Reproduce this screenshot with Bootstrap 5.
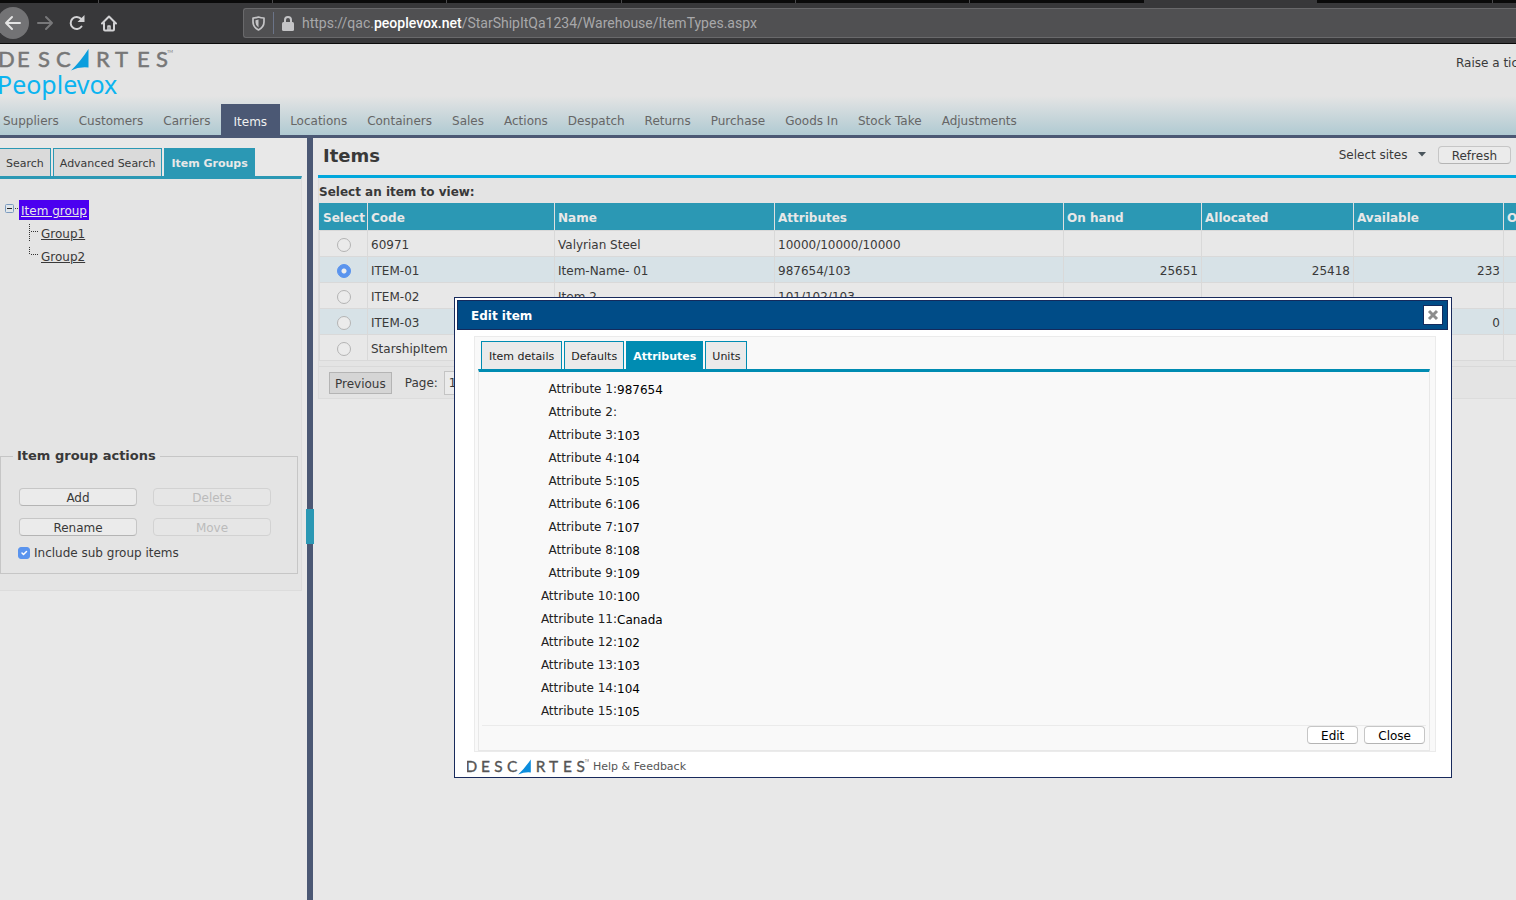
<!DOCTYPE html>
<html lang="en">
<head>
<meta charset="utf-8">
<meta name="viewport" content="width=device-width, initial-scale=1">
<title>Items - Peoplevox</title>
<link href="https://cdn.jsdelivr.net/npm/bootstrap@5.3.0/dist/css/bootstrap.min.css" rel="stylesheet">
<style>
  :root { --teal: #2b98b4; --slate: #4b5874; --line: #d9d9d9; }
  body { font: 12px/16px "DejaVu Sans", Verdana, sans-serif; color: #393939; background: #e8e8e8; overflow-x: hidden; }
  a { color: inherit; }

  .tabstrip { height: 3px; background: #0a0a0a; }
  .tabstrip i { border-right: 1px solid #4a4a4c; flex: none; }
  .tabstrip i.current { background: #38383a; border: 0; }
  .toolbar { height: 41px; background: #38383a; border-bottom: 1px solid #0a0a0a; }
  .toolbar button { background: none; border: 0; padding: 0; width: 32px; height: 32px; flex: none; display: grid; place-items: center; }
  .toolbar .back { background: #737375; border-radius: 50%; margin-left: -3px; }
  .address { height: 30px; margin-left: 118px; background: #505052; border: 1px solid #69696b; border-right: 0; border-radius: 3px 0 0 3px; font: 14px/20px Roboto, sans-serif; color: #a8a8aa; white-space: nowrap; }
  .address b { color: #fff; font-weight: 500; }
  .address .sep { width: 1px; height: 22px; background: #6b7488; }

  .masthead { height: 94px; border-bottom: 3px solid var(--slate); background: linear-gradient(#e4e4e4 0, #e4e4e4 52px, #b0cad2 91px); overflow: hidden; }
  .wordmark { stroke-width: .5; }
  .product { font: 25px/24px "Noto Sans", sans-serif; color: #0cb4f0; margin-left: -3px; }
  .raise { width: 60px; white-space: nowrap; overflow: hidden; text-decoration: none; margin-top: 11px; }
  .mainnav a { padding: 9px 10px 6px; color: #666; text-decoration: none; white-space: nowrap; height: 31px; }
  .mainnav a:first-child { padding-left: 3px; }
  .mainnav a.active { padding: 10px 13px 5px; background: var(--slate); color: #f0f0f0; }

  .side { width: 307px; flex: none; padding: 10px 5px 0 0; }
  .tabset { gap: 2px; font-size: 11px; height: 28px; }
  .tabset button { border: 1px solid var(--tab); border-bottom: 0; background: var(--tabbg); color: inherit; padding: 2px 6px 0; height: 28px; white-space: nowrap; }
  .tabset button.active { background: var(--tab); color: #fff; font-weight: bold; }
  .side .tabset { --tab: var(--teal); --tabbg: #dadada; }
  .side .tabset button:first-child { border-left: 0; }
  .side .tabset button.active { color: #e8e8e8; }
  .sidepanel { border: 1px solid #dcdcdc; border-top: 3px solid var(--teal); border-left: 0; background: #e4e4e4; height: 415px; padding-top: 21px; }
  .tree { height: 246px; padding-left: 5px; }
  .tree .node { height: 23px; }
  .tree .root { background: #4b00f0; color: #e8e8e8; padding: 3px 2px 1px; height: 20px; }
  .tree .kid { padding-left: 24px; }
  .tree .kid a { padding-top: 3px; }
  .groupbox { border: 1px solid #c6c6c6; height: 128px; margin-right: 3px; padding: 0 17px; }
  .groupbox legend { float: none; width: auto; font: bold 13px/20px "DejaVu Sans", sans-serif; padding: 0 4px; margin: 0 0 0 -5px; }
  .grid-btns { display: grid; grid-template-columns: 118px 118px; gap: 12px 16px; margin: 22px 0 9px 1px; }
  .mac { height: 18px; background: #ebebeb; border: 1px solid #c6c6c6; border-bottom-color: #b4b4b4; border-radius: 4px; color: inherit; padding: 2px 13px 0; line-height: 14px; }
  .mac:disabled { color: #bbb; background: #e6e6e6; border-color: #d2d2d2; }
  .form-check-input { flex: none; margin: 0; border-color: #b4b4b4; background-color: #ebebeb; }
  .tick { width: 12px; height: 12px; }
  .pick { width: 14px; height: 14px; vertical-align: middle; float: none; }
  .form-check-input:checked { background-color: #5a94ee; border-color: #5a94ee; }
  .form-check-input.pick:checked { background-image: radial-gradient(circle, #eee 2px, transparent 3px); }

  .splitter { width: 6px; flex: none; background: var(--slate); }
  .splitter button { top: 371px; left: -1px; width: 8px; height: 35px; border: 0; padding: 0; background: var(--teal); }

  .content { min-width: 0; padding-left: 5px; }
  .titlebar { height: 40px; border-bottom: 3px solid #00a7dc; padding: 0 5px 4px; }
  .titlebar h1 { font: bold 18px/22px "DejaVu Sans", sans-serif; margin: 2px 0 0; }
  .sites { appearance: none; background: none; border: 0; color: inherit; padding: 0; width: 79px; }
  .listing { background: #e4e4e4; border: 1px solid #dcdcdc; border-width: 0 0 1px 1px; }
  .listing h2 { font: bold 12px/16px "DejaVu Sans", sans-serif; margin: 0; padding: 6px 0 3px; }
  .items { table-layout: fixed; width: 100%; background: #e8e8e8; border-collapse: collapse; }
  .items td, .items th { border: 1px solid var(--line); border-width: 0 0 1px 1px; padding: 3px 3px 0; height: 26px; white-space: nowrap; overflow: hidden; }
  .items th { background: var(--teal); color: #e8e8e8; height: 27px; border-left-color: #e0e0e0; }
  .items th:first-child { border-left-color: var(--teal); }
  .items tr.alt td { background: #d7e2e7; }
  .pager { margin-top: 5px; border-top: 1px solid #d9d9d9; height: 32px; padding: 5px 10px 3px; }
  .pager button { background: #d5d5d5; border: 1px solid #b4b4b4; height: 22px; padding: 1px 5px 0; color: inherit; }
  .pager label { margin-left: 13px; }
  .pager input { width: 40px; height: 24px; border: 1px solid #c4c4c4; background: #ebebeb; color: inherit; padding: 0 4px; margin-left: 6px; }

  .dialog-edit { left: 454px; right: 64px; top: 297px; border: 1px solid #182a5c; background: #fff; padding: 2px 3px 2px 2px; z-index: 5; color: #222; }
  .dialog-edit header { background: #004c87; border: 1px solid #142a5c; height: 30px; color: #fff; padding: 0 4px 0 13px; }
  .dialog-edit header h2 { font: bold 12px/16px "DejaVu Sans", sans-serif; margin: 2px 0 0; }
  .dialog-edit header button { width: 20px; height: 20px; background: #fff; border: 1px solid #142a5c; padding: 0; display: grid; place-items: center; }
  .sheet { margin: 6px 12px 0 17px; border: 1px solid #ebebeb; background: #f9f9f9; padding: 4px 5px 0 3px; }
  .sheet .tabset { --tab: #008cb2; --tabbg: #eaeaea; padding-left: 3px; }
  .sheet .tabset button:first-child { padding: 2px 7px 0; }
  .sheetbody { border: 1px solid #e8e8e8; border-top: 3px solid #008cb2; padding: 6px 3px 6px; }
  .attrs { margin: 0 0 2px; }
  .attrs div { height: 23px; line-height: 23px; }
  .attrs dt { width: 135px; text-align: right; font-weight: normal; flex: none; }
  .attrs dd { margin: 0; color: #000; padding-top: 1px; }
  .actions { border-top: 1px solid #ebebeb; gap: 6px; padding-right: 1px; }
  .actions .mac { background: #fff; color: #000; }
  .dialog-foot { padding: 6px 0 0 10px; font-size: 11px; color: #555; }
  .dialog-foot a { text-decoration: none; padding-top: 1px; }
</style>
</head>
<body class="min-vh-100 d-flex flex-column position-relative">

<div class="tabstrip d-flex">
  <i style="width:99px"></i><i style="width:174px"></i><i style="width:174px"></i><i style="width:175px"></i><i style="width:174px"></i><i style="width:174px"></i><i style="width:174px;border:0"></i><i class="current" style="width:173px"></i><i style="width:176px"></i>
</div>
<div class="toolbar d-flex align-items-center">
  <button class="back" aria-label="Back"><svg width="18" height="16" viewBox="0 0 18 16" fill="none" stroke="#e4e4e4" stroke-width="2" stroke-linecap="round" stroke-linejoin="round"><path d="M16 8H2M8 2L2 8l6 6"/></svg></button>
  <button aria-label="Forward"><svg width="18" height="16" viewBox="0 0 18 16" fill="none" stroke="#78787a" stroke-width="2" stroke-linecap="round" stroke-linejoin="round"><path d="M2 8h14M10 2l6 6-6 6"/></svg></button>
  <button aria-label="Reload"><svg width="16" height="16" viewBox="0 0 16 16"><path d="M12.500 11.500A6 6 0 1 1 12.200 4" fill="none" stroke="#d2d2d4" stroke-width="2" stroke-linecap="round"/><path d="M15.500 0v7H8.500z" fill="#d2d2d4"/></svg></button>
  <button aria-label="Home"><svg width="16" height="17" viewBox="0 0 16 17" fill="none" stroke="#d2d2d4" stroke-width="2" stroke-linecap="round" stroke-linejoin="round"><path d="M1 8.500L8 1.500l7 7M3 8v6.500q0 1 1 1h8q1 0 1-1V8"/><path d="M7 15v-4h2v4" stroke-width="1.500"/></svg></button>
  <div class="address flex-grow-1 d-flex align-items-center" role="textbox" aria-label="Address">
    <svg class="mx-2" width="13" height="15" viewBox="0 0 13 15"><path d="M1 2q3 0 5.500-1Q9 2 12 2v4q0 5-5.500 8Q1 11 1 6z" fill="none" stroke="#c4c4c6" stroke-width="1.700" stroke-linejoin="round"/><path d="M6.500 3.500q-2 .8-3 .8V6.500q0 3 3 5z" fill="#c4c4c6"/></svg>
    <span class="sep"></span>
    <svg class="mx-2" width="12" height="15" viewBox="0 0 12 15"><rect y="6" width="12" height="9" rx="1.500" fill="#c4c4c6"/><path d="M3 7V4a3 3 0 0 1 6 0v3" fill="none" stroke="#c4c4c6" stroke-width="2"/></svg>
    <span>https://qac.<b>peoplevox.net</b>/StarShipItQa1234/Warehouse/ItemTypes.aspx</span>
  </div>
</div>

<header class="masthead d-flex flex-column justify-content-between">
  <div class="d-flex justify-content-between align-items-start">
    <div>
      <svg class="wordmark d-block" width="176" height="28" viewBox="-2 -5 176 28" font-family="Lato, sans-serif" font-size="22" fill="#777" role="img" aria-label="Descartes"><text y="18" x="-4 15 36 54 94 113 135 154" stroke="#777">DESCRTES</text><path d="M69 21.500Q78 13 86.500 0v18.500Q77 17.500 69 21.500z" fill="#0b9ddd"/><text x="165" y="4" font-size="4">TM</text></svg>
      <div class="product">Peoplevox</div>
    </div>
    <a class="raise" href="#">Raise a ticket</a>
  </div>
  <nav class="mainnav d-flex">
    <a href="#">Suppliers</a><a href="#">Customers</a><a href="#">Carriers</a><a href="#" class="active">Items</a><a href="#">Locations</a><a href="#">Containers</a><a href="#">Sales</a><a href="#">Actions</a><a href="#">Despatch</a><a href="#">Returns</a><a href="#">Purchase</a><a href="#">Goods In</a><a href="#">Stock Take</a><a href="#">Adjustments</a>
  </nav>
</header>

<main class="d-flex flex-grow-1">
  <aside class="side">
    <div class="tabset d-flex"><button>Search</button><button>Advanced Search</button><button class="active">Item Groups</button></div>
    <div class="sidepanel">
      <div class="tree">
        <div class="node d-flex align-items-start">
          <svg width="14" height="20" viewBox="0 0 14 20"><rect x=".5" y="4.500" width="8" height="8" rx="1" fill="#e0e6ea" stroke="#7c9cc0"/><path d="M2 8.500h5" stroke="#222"/><path d="M10 8.500h4" stroke="#444" stroke-dasharray="1 1"/></svg>
          <a class="root" href="#">Item group</a>
        </div>
        <div class="node kid d-flex"><svg width="12" height="20" viewBox="0 0 12 20"><path d="M.5 -1v19M2 8.500h8" stroke="#333" stroke-dasharray="1 1"/></svg><a href="#">Group1</a></div>
        <div class="node kid d-flex"><svg width="12" height="20" viewBox="0 0 12 20"><path d="M.5 -1v10M2 8.500h8" stroke="#333" stroke-dasharray="1 1"/></svg><a href="#">Group2</a></div>
      </div>
      <fieldset class="groupbox">
        <legend>Item group actions</legend>
        <div class="grid-btns">
          <button class="mac">Add</button><button class="mac" disabled>Delete</button>
          <button class="mac">Rename</button><button class="mac" disabled>Move</button>
        </div>
        <label class="d-flex align-items-center"><input class="form-check-input tick me-1" type="checkbox" checked>Include sub group items</label>
      </fieldset>
    </div>
  </aside>
  <div class="splitter position-relative"><button class="position-absolute" aria-label="Collapse side panel"></button></div>

  <section class="content flex-grow-1">
    <div class="titlebar d-flex align-items-center">
      <h1 class="me-auto">Items</h1>
      <select class="sites" aria-label="Sites"><option>Select sites</option></select>
      <svg class="me-2" width="12" height="5" viewBox="0 0 12 5"><path d="M0 0h8L4 4.500z" fill="#4a555c"/></svg>
      <button class="mac">Refresh</button>
    </div>
    <div class="listing">
      <h2>Select an item to view:</h2>
      <table class="items">
        <colgroup><col style="width:48px"><col style="width:187px"><col style="width:220px"><col style="width:289px"><col style="width:138px"><col style="width:152px"><col style="width:150px"><col></colgroup>
        <thead><tr><th>Select</th><th>Code</th><th>Name</th><th>Attributes</th><th>On hand</th><th>Allocated</th><th>Available</th><th>O</th></tr></thead>
        <tbody>
          <tr><td class="text-center"><input class="form-check-input pick" type="radio" name="item" aria-label="60971"></td><td>60971</td><td>Valyrian Steel</td><td>10000/10000/10000</td><td></td><td></td><td></td><td></td></tr>
          <tr class="alt"><td class="text-center"><input class="form-check-input pick" type="radio" name="item" aria-label="ITEM-01" checked></td><td>ITEM-01</td><td>Item-Name- 01</td><td>987654/103</td><td class="text-end">25651</td><td class="text-end">25418</td><td class="text-end">233</td><td></td></tr>
          <tr><td class="text-center"><input class="form-check-input pick" type="radio" name="item" aria-label="ITEM-02"></td><td>ITEM-02</td><td>Item 2</td><td>101/102/103</td><td></td><td></td><td></td><td></td></tr>
          <tr class="alt"><td class="text-center"><input class="form-check-input pick" type="radio" name="item" aria-label="ITEM-03"></td><td>ITEM-03</td><td></td><td></td><td></td><td></td><td class="text-end">0</td><td></td></tr>
          <tr><td class="text-center"><input class="form-check-input pick" type="radio" name="item" aria-label="StarshipItem"></td><td>StarshipItem</td><td></td><td></td><td></td><td></td><td></td><td></td></tr>
        </tbody>
      </table>
      <div class="pager d-flex align-items-center">
        <button>Previous</button>
        <label class="d-flex align-items-center">Page:<input type="text" value="1"></label>
      </div>
    </div>
  </section>
</main>

<div class="dialog-edit position-absolute" role="dialog" aria-labelledby="dlg-title">
  <header class="d-flex align-items-center justify-content-between">
    <h2 id="dlg-title">Edit item</h2>
    <button aria-label="Close dialog"><svg width="12" height="12" viewBox="0 0 12 12"><path d="M2 2l8 8M10 2L2 10" stroke="#8c8c8c" stroke-width="3"/></svg></button>
  </header>
  <div class="sheet">
    <div class="tabset d-flex"><button>Item details</button><button>Defaults</button><button class="active">Attributes</button><button>Units</button></div>
    <div class="sheetbody">
      <dl class="attrs">
        <div class="d-flex"><dt>Attribute 1:</dt><dd>987654</dd></div>
        <div class="d-flex"><dt>Attribute 2:</dt><dd></dd></div>
        <div class="d-flex"><dt>Attribute 3:</dt><dd>103</dd></div>
        <div class="d-flex"><dt>Attribute 4:</dt><dd>104</dd></div>
        <div class="d-flex"><dt>Attribute 5:</dt><dd>105</dd></div>
        <div class="d-flex"><dt>Attribute 6:</dt><dd>106</dd></div>
        <div class="d-flex"><dt>Attribute 7:</dt><dd>107</dd></div>
        <div class="d-flex"><dt>Attribute 8:</dt><dd>108</dd></div>
        <div class="d-flex"><dt>Attribute 9:</dt><dd>109</dd></div>
        <div class="d-flex"><dt>Attribute 10:</dt><dd>100</dd></div>
        <div class="d-flex"><dt>Attribute 11:</dt><dd>Canada</dd></div>
        <div class="d-flex"><dt>Attribute 12:</dt><dd>102</dd></div>
        <div class="d-flex"><dt>Attribute 13:</dt><dd>103</dd></div>
        <div class="d-flex"><dt>Attribute 14:</dt><dd>104</dd></div>
        <div class="d-flex"><dt>Attribute 15:</dt><dd>105</dd></div>
      </dl>
      <div class="actions d-flex justify-content-end"><button class="mac">Edit</button><button class="mac">Close</button></div>
    </div>
  </div>
  <footer class="dialog-foot d-flex align-items-center">
    <svg class="wordmark me-1" width="122" height="17" viewBox="0 -2 174 24" font-family="Lato, sans-serif" font-size="22" fill="#555" role="img" aria-label="Descartes"><text y="18" x="-2 20 39 57 98 117 137 156" stroke="#555">DESCRTES</text><path d="M73 21.500Q82 13 91 0v18.500Q82 17.500 73 21.500z" fill="#0b8ddd"/><text x="168" y="4" font-size="4">TM</text></svg>
    <a href="#">Help &amp; Feedback</a>
  </footer>
</div>

<script src="https://cdn.jsdelivr.net/npm/bootstrap@5.3.0/dist/js/bootstrap.bundle.min.js"></script>
</body>
</html>
